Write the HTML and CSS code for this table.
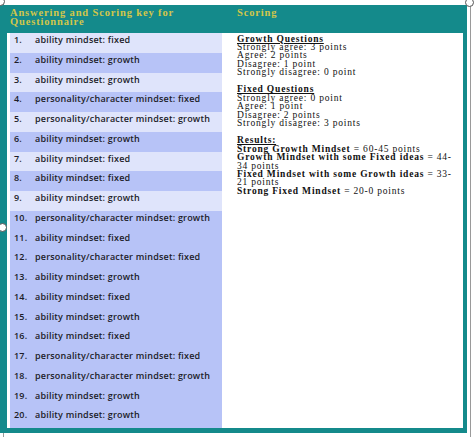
FILE: index.html
```html
<!DOCTYPE html>
<html>
<head>
<meta charset="utf-8">
<link rel="stylesheet" href="styles.css">
</head>
<body>
<div class="page">
  <div class="table">
    <div class="head">
      <div class="head-left">Answering and Scoring key for Questionnaire</div>
      <div class="head-right">Scoring</div>
    </div>
    <div class="body">
      <div class="left">
        <ol class="list">
          <li class="row light"><span class="num">1.</span><span>ability mindset: fixed</span></li>
          <li class="row dark"><span class="num">2.</span><span>ability mindset: growth</span></li>
          <li class="row light"><span class="num">3.</span><span>ability mindset: growth</span></li>
          <li class="row dark"><span class="num">4.</span><span>personality/character mindset: fixed</span></li>
          <li class="row light"><span class="num">5.</span><span>personality/character mindset: growth</span></li>
          <li class="row dark"><span class="num">6.</span><span>ability mindset: growth</span></li>
          <li class="row light"><span class="num">7.</span><span>ability mindset: fixed</span></li>
          <li class="row dark"><span class="num">8.</span><span>ability mindset: fixed</span></li>
          <li class="row light"><span class="num">9.</span><span>ability mindset: growth</span></li>
          <li class="row dark"><span class="num">10.</span><span>personality/character mindset: growth</span></li>
          <li class="row dark"><span class="num">11.</span><span>ability mindset: fixed</span></li>
          <li class="row dark"><span class="num">12.</span><span>personality/character mindset: fixed</span></li>
          <li class="row dark"><span class="num">13.</span><span>ability mindset: growth</span></li>
          <li class="row dark"><span class="num">14.</span><span>ability mindset: fixed</span></li>
          <li class="row dark"><span class="num">15.</span><span>ability mindset: growth</span></li>
          <li class="row dark"><span class="num">16.</span><span>ability mindset: fixed</span></li>
          <li class="row dark"><span class="num">17.</span><span>personality/character mindset: fixed</span></li>
          <li class="row dark"><span class="num">18.</span><span>personality/character mindset: growth</span></li>
          <li class="row dark"><span class="num">19.</span><span>ability mindset: growth</span></li>
          <li class="row dark"><span class="num">20.</span><span>ability mindset: growth</span></li>
        </ol>
      </div>
      <div class="right">
        <div class="section">
          <div class="title">Growth Questions</div>
          <div>Strongly agree: 3 points</div>
          <div>Agree: 2 points</div>
          <div>Disagree: 1 point</div>
          <div>Strongly disagree: 0 point</div>
        </div>
        <div class="section">
          <div class="title">Fixed Questions</div>
          <div>Strongly agree: 0 point</div>
          <div>Agree: 1 point</div>
          <div>Disagree: 2 points</div>
          <div>Strongly disagree: 3 points</div>
        </div>
        <div class="section">
          <div class="title">Results:</div>
          <div><b>Strong Growth Mindset</b> = 60-45 points</div>
          <div><b>Growth Mindset with some Fixed ideas</b> = 44-34 points</div>
          <div><b>Fixed Mindset with some Growth ideas</b> = 33-21 points</div>
          <div><b>Strong Fixed Mindset</b> = 20-0 points</div>
        </div>
      </div>
    </div>
  </div>
  <div class="frame"></div>
  <span class="handle h-tl"></span>
  <span class="handle h-tr"></span>
  <span class="handle h-ml"></span>
  <span class="handle h-mr"></span>
</div>
</body>
</html>
```

FILE: styles.css
```css
* { box-sizing: border-box; }
html, body { margin: 0; padding: 0; background: #ffffff; }
.page {
  position: relative;
  width: 474px;
  height: 437px;
  padding-top: 5px;
  overflow: hidden;
}
.table {
  position: relative;
  z-index: 1;
  width: 467px;
  background: #148a8b;
  padding: 0 4px 5px 7px;
}
.head {
  display: grid;
  grid-template-columns: 225px 1fr;
  height: 28px;
  font-family: "Liberation Serif", serif;
  font-weight: bold;
  font-size: 10.5px;
  line-height: 8.5px;
  letter-spacing: 0.85px;
  color: #d2c64a;
}
.head-left { padding: 4px 0 0 3px; width: 200px; }
.head-right { padding: 4px 0 0 5px; }
.body {
  display: grid;
  grid-template-columns: 225px 1fr;
  background: #ffffff;
}
.left { padding: 0 10px 0 3px; }
.list {
  list-style: none;
  margin: 0;
  padding: 0;
  font-family: "Open Sans", sans-serif;
  font-size: 9px;
  font-weight: 600;
  letter-spacing: 0.2px;
  color: #1c1c28;
}
.row {
  display: flex;
  height: 19.75px;
  padding: 1px 0 0 4px;
  line-height: 12px;
}
.row.light { background: #dfe4fb; }
.row.dark { background: #b7c3f7; }
.num { width: 21px; flex: none; }
.right {
  padding: 1.5px 8px 0 5px;
  font-family: "Liberation Serif", serif;
  font-size: 9.5px;
  line-height: 8.45px;
  letter-spacing: 0.8px;
  color: #111111;
}
.section { margin-bottom: 8.6px; }
.title { font-weight: bold; text-decoration: underline; }
.frame {
  position: absolute;
  left: 3px;
  top: 3px;
  width: 468px;
  height: 440px;
  border-left: 1px solid #9a9a9a;
  border-right: 1px solid #9a9a9a;
  z-index: 0;
}
.handle {
  position: absolute;
  z-index: 2;
  width: 9px;
  height: 9px;
  border: 1.5px solid #555555;
  border-radius: 50%;
  background: #ffffff;
}
.h-tl { left: -4px; top: -3px; }
.h-tr { left: 465px; top: -2px; }
.h-ml { left: -2px; top: 223px; }
.h-mr { left: 458px; top: 223px; z-index: 0; }
```
